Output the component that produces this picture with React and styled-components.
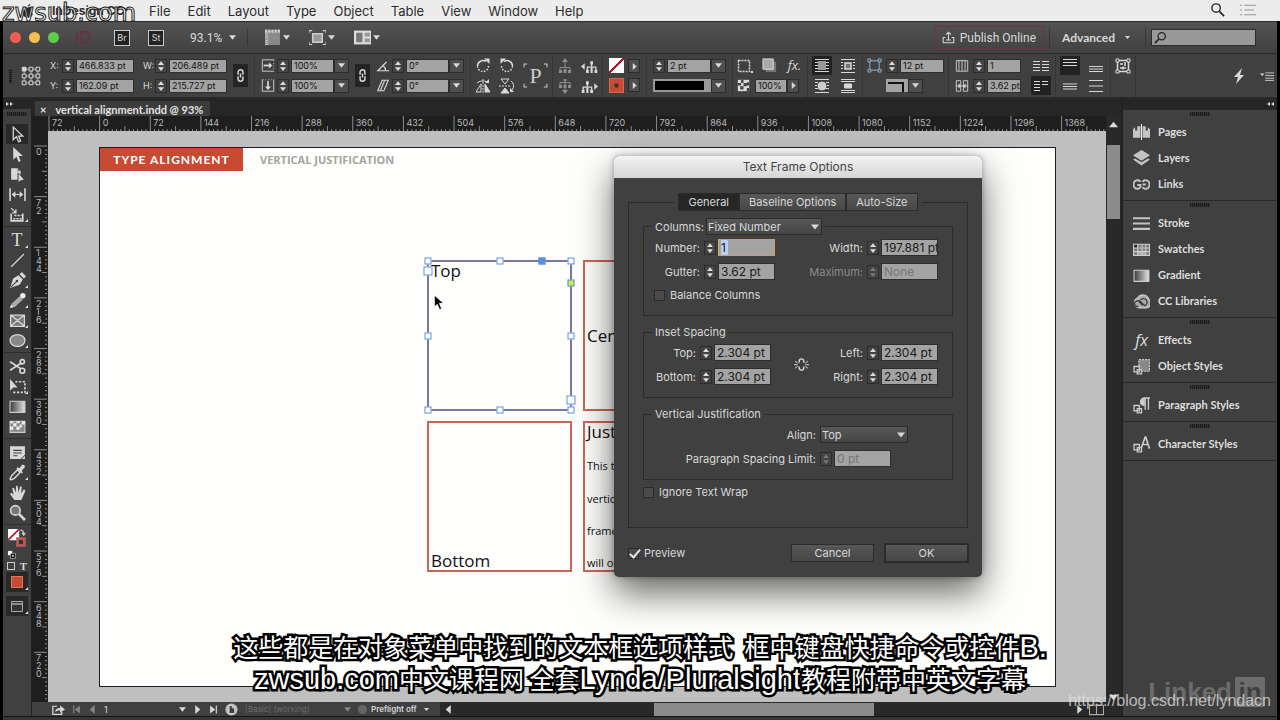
import React from "react";
import styled, { createGlobalStyle, css } from "styled-components";

const ui = `Inter, "Liberation Sans", sans-serif`;
const bar = `"Open Sans", "Noto Sans", sans-serif`;
const label = `Lato, "Open Sans", sans-serif`;

/* icons, all drawn on a 16 x 16 grid unless noted */

const icons = {
  apple: (
    <path
      fill="currentColor"
      d="M11 1c.1 1.500-1.200 3-2.700 2.900C8.200 2.500 9.500 1.100 11 1zM13.800 11.600c-.8 1.900-2 3.400-3.100 3.400-.9 0-1.300-.5-2.400-.5s-1.600.5-2.400.5C4.300 15 2 11.600 2 8.700c0-2.700 1.700-4.300 3.500-4.300 1 0 1.900.7 2.600.7.600 0 1.700-.7 3-.7.900 0 1.900.5 2.500 1.400-2.100 1.300-1.800 4.600.2 5.800z"
    />
  ),
  search: (
    <g fill="none" stroke="currentColor" strokeWidth="1.500">
      <circle cx="6.500" cy="6.500" r="4.500" />
      <path d="M10 10l5 5" strokeWidth="2" />
    </g>
  ),
  list: (
    <path d="M1 3h2M5 3h11M1 7.500h2M5 7.500h9M1 12h2M5 12h11" stroke="currentColor" />
  ),
  reference: (
    <g fill="none" stroke="currentColor" strokeWidth=".8">
      <path d="M4 2.500h3M9 2.500h3M4 8h3M9 8h3M4 13.500h3M9 13.500h3M2.500 4v3M2.500 9v3M13.500 4v3M13.500 9v3M8 4v3M8 9v3" strokeWidth=".6" />
      <path d="M6.500 1h3v3h-3zM12 1h3v3h-3zM1 6.500h3v3H1zM6.500 6.500h3v3h-3zM12 6.500h3v3h-3zM1 12h3v3H1zM6.500 12h3v3h-3zM12 12h3v3h-3z" fill="#404040" />
      <path d="M1 1h3v3H1z" fill="currentColor" />
    </g>
  ),
  chain: (
    <g fill="none" stroke="currentColor" strokeWidth="1.800">
      <path d="M5 7V4a3 3 0 0 1 6 0v3M5 9v3a3 3 0 0 0 6 0V9M8 5.500v5" />
    </g>
  ),
  unchain: (
    <g fill="none" stroke="currentColor" strokeWidth="1.500">
      <path d="M5.500 6V4.500a2.500 2.500 0 0 1 5 0V6M5.500 10v1.500a2.500 2.500 0 0 0 5 0V10" />
      <path d="M4 6.500L1 4.500M4 8.200H0M4 10l-3 2M12 6.500l3-2M12 8.200h4M12 10l3 2" strokeWidth="1" />
    </g>
  ),
  scaleX: (
    <g stroke="currentColor" fill="none">
      <path d="M1 1.500h14M1 14.500h14M1.500 2v12" />
      <path d="M14.500 2v12" strokeDasharray="1 2" />
      <path d="M3 8h8" strokeWidth="2" />
      <path d="M9 4.500l4 3.500-4 3.500z" fill="currentColor" stroke="none" />
    </g>
  ),
  scaleY: (
    <g stroke="currentColor" fill="none">
      <path d="M1.500 1v14M14.500 1v14M2 14.500h12" />
      <path d="M2 1.500h12" strokeDasharray="1 2" />
      <path d="M8 3v8" strokeWidth="2" />
      <path d="M4.500 9L8 13l3.500-4z" fill="currentColor" stroke="none" />
    </g>
  ),
  angle: (
    <path d="M15 14H2L12 4M8 8a8 8 0 0 1 3 6" stroke="currentColor" fill="none" strokeWidth="1.300" />
  ),
  shear: (
    <g stroke="currentColor" fill="none" strokeWidth="1.300">
      <path d="M2 14L7 2h7L9 14z" />
      <path d="M5 14L10 2" />
    </g>
  ),
  rotateCw: (
    <g fill="none" stroke="currentColor" strokeWidth="1.500">
      <path d="M2.500 8A5.500 5.500 0 0 1 11 3.500" />
      <path d="M13.500 8A5.500 5.500 0 1 1 2.500 8" strokeDasharray="1.500 1.500" />
      <path d="M9 .5h5.500V6z" fill="currentColor" stroke="none" />
    </g>
  ),
  rotateCcw: (
    <g fill="none" stroke="currentColor" strokeWidth="1.500">
      <path d="M13.500 8A5.500 5.500 0 0 0 5 3.500" />
      <path d="M2.500 8a5.500 5.500 0 1 0 11 0" strokeDasharray="1.500 1.500" />
      <path d="M7 .5H1.500V6z" fill="currentColor" stroke="none" />
    </g>
  ),
  flipH: (
    <g fill="none" stroke="currentColor">
      <path d="M8 1v14" strokeDasharray="2 1" />
      <path d="M1 14l5-8v8z" />
      <path d="M15 14l-5-8v8z" fill="currentColor" />
      <path d="M2 5a7 5 0 0 1 10-1" />
      <path d="M10 5h4V1z" fill="currentColor" stroke="none" />
    </g>
  ),
  flipV: (
    <g fill="none" stroke="currentColor">
      <path d="M0 8h12" strokeDasharray="2 1" />
      <path d="M2 1h8L6 6z" />
      <path d="M2 15h8l-4-5z" fill="currentColor" />
      <path d="M12 3a6 6 0 0 1 1 9" />
      <path d="M11 10v4h4z" fill="currentColor" stroke="none" />
    </g>
  ),
  treeUp: (
    <g stroke="currentColor" fill="none">
      <path d="M8 4v6M3 12V9.500h10V12" />
      <path d="M5 4l3-4 3 4zM2 12h3v3H2zM6.500 11h3v4h-3zM11 12h3v3h-3z" fill="currentColor" stroke="none" />
    </g>
  ),
  treeDown: (
    <g stroke="currentColor" fill="none">
      <path d="M8 2v10M3 8V4.500h10V8" />
      <path d="M5 12l3 4 3-4zM2 7h3v3H2zM6.500 7h3v3h-3zM11 7h3v3h-3zM6.500 1h3v2h-3z" fill="currentColor" stroke="none" />
    </g>
  ),
  treeLeft: (
    <g stroke="currentColor" fill="none">
      <path d="M10 5v4M6 12V8.500h8V12" strokeWidth="1.200" />
      <path d="M3.500 5v6L0 8zM8.700 3h2.600v3H8.700zM4.700 11h2.600v3H4.700zM9 9h2v5H9zM12.700 11h2.600v3h-2.600z" fill="currentColor" stroke="none" />
    </g>
  ),
  treeRight: (
    <g stroke="currentColor" fill="none">
      <path d="M6 5v4M2 12V8.500h8V12" strokeWidth="1.200" />
      <path d="M12.500 5v6L16 8zM4.700 3h2.600v3H4.700zM.7 11h2.600v3H.700zM5 9h2v5H5zM8.700 11h2.600v3H8.700z" fill="currentColor" stroke="none" />
    </g>
  ),
  corners: (
    <g fill="none" stroke="currentColor">
      <path d="M1.500 2.500h11v11h-11z" strokeDasharray="2 1" strokeWidth="1.500" />
      <path d="M14 13h2v2h-2z" fill="currentColor" stroke="none" />
    </g>
  ),
  shadow: (
    <g>
      <path d="M4 4h11v11H4z" fill="#777" />
      <path d="M1 1h11v11H1z" fill="#aaa" stroke="#ddd" />
    </g>
  ),
  checker: (
    <g>
      <path d="M1 1h14v14H1z" fill="#ddd" />
      <path d="M5 1h3v4H5zM12 4h3v4h-3zM1 5h4v3H1zM8 5h4v4H8zM4 9h4v4H4zM12 11h3v4h-3z" fill="#444" />
    </g>
  ),
  wrapNone: (
    <g stroke="currentColor">
      <path d="M1 1.500h14M1 4.500h14M1 7.500h14M1 10.500h14M1 13.500h14" />
      <path d="M4 3h8v9H4z" fill="#999" stroke="none" />
    </g>
  ),
  wrapBox: (
    <g stroke="currentColor" fill="none">
      <path d="M1 1.500h14M1 14.500h14M1 4.500h2M1 7.500h2M1 10.500h2M13 4.500h2M13 7.500h2M13 10.500h2" />
      <path d="M5 5h6v6H5z" fill="#777" strokeWidth="1.500" />
    </g>
  ),
  wrapShape: (
    <g stroke="currentColor" fill="none">
      <path d="M1 1.500h14M1 14.500h14M1 4.500h3M1 7.500h2M1 10.500h3M12 4.500h3M13 7.500h2M12 10.500h3" />
      <circle cx="8" cy="8" r="4" fill="#ccc" />
    </g>
  ),
  wrapJump: (
    <g stroke="currentColor" fill="none">
      <path d="M1 1.500h14M1 3.500h14M1 12.500h14M1 14.500h14" />
      <path d="M4.500 6h7v4h-7z" fill="currentColor" />
    </g>
  ),
  fitFrame: (
    <g fill="none" stroke="#8fb3d6">
      <path d="M3 3h10v10H3z" />
      <path d="M1 1h3v3H1zM12 1h3v3h-3zM1 12h3v3H1zM12 12h3v3h-3z" fill="#404040" />
    </g>
  ),
  columns: (
    <path d="M1.500 2.500h13v12h-13zM4.500 2v12M8 2v12M11.500 2v12" fill="none" stroke="currentColor" />
  ),
  gutter: (
    <g fill="none" stroke="currentColor">
      <path d="M1.500 2.500h5v12h-5zM9.500 2.500h5v12h-5z" />
      <path d="M1 8.500h14" />
      <path d="M4 5.500l3 3-3 3zM12 5.500l-3 3 3 3z" fill="currentColor" stroke="none" />
    </g>
  ),
  twoCols: (
    <path d="M0 3.500h7M9 3.500h7M0 6.500h7M9 6.500h7M0 9.500h7M9 9.500h7M0 12.500h7M9 12.500h7" stroke="currentColor" />
  ),
  twoColsShort: (
    <path d="M1 3.500h6M9 3.500h6M1 6.500h6M9 6.500h6M1 9.500h6M1 12.500h6" stroke="currentColor" />
  ),
  alignTop: <path d="M1 1.500h14M1 4.500h14M1 7.500h14" stroke="currentColor" />,
  alignMid: <path d="M1 6h14M1 8.500h14M1 11h14" stroke="currentColor" />,
  alignBottom: <path d="M1 8.500h14M1 11h14M1 13.500h14" stroke="currentColor" />,
  alignJustify: <path d="M1 2.500h14M1 8h14M1 13.500h14" stroke="currentColor" />,
  fitContent: (
    <g fill="none" stroke="currentColor">
      <path d="M2.500 2.500h11v11h-11z" strokeWidth="1.500" />
      <path d="M1 1h3v3H1zM12 1h3v3h-3zM1 12h3v3H1zM12 12h3v3h-3z" fill="#404040" />
      <path d="M5 6h3M10 4v4M5 10h6M8 8.500v3" strokeWidth="1.500" />
    </g>
  ),
  bolt: <path d="M11 0L3 9h4l-2 7 8-9H9z" fill="currentColor" />,
  flyout: (
    <g>
      <path d="M0 5h5L2.500 8z" fill="currentColor" />
      <path d="M6 4.500h10M6 7.500h10M6 10.500h10M6 13h10" stroke="currentColor" />
    </g>
  ),
  publish: (
    <g fill="none" stroke="currentColor" strokeWidth="1.300">
      <path d="M4 8H1.500v6.500h13V8H12" />
      <path d="M8 11V2M5 4.500L8 1.500l3 3M5 11h6" />
    </g>
  ),
  viewRuler: (
    <g fill="none" stroke="#ccc">
      <path d="M1 1h14v14H1z" fill="#8a8a8a" stroke="none" />
      <path d="M1 2h14" strokeWidth="3" strokeDasharray="2 1" />
      <path d="M2.500 4v11" strokeWidth="3" strokeDasharray="1 1" />
    </g>
  ),
  viewScreen: (
    <g fill="none" stroke="#ccc">
      <path d="M3.500 4.500h9v8h-9z" fill="#999" strokeWidth="1.500" />
      <path d="M0 4V1.500h3M13 1.500h3V4M16 12v2.500h-3M3 14.500H0V12" />
    </g>
  ),
  viewArrange: (
    <g>
      <path d="M0 1.500h16v13H0z" fill="#ddd" />
      <path d="M2 3.500h6v9H2z" fill="#777" />
      <path d="M10 3.500h5v3.500h-5zM10 9h5v3.500h-5z" fill="#999" />
    </g>
  ),
  selection: <path d="M4 1v12l3-3 2 5 2-1-2-4.500h4z" fill="#2a2a2a" stroke="currentColor" strokeWidth="1.200" />,
  direct: <path d="M4 1v12l3-3 2 5 2-1-2-4.500h4z" fill="currentColor" />,
  pageTool: (
    <g fill="currentColor">
      <path d="M2 2h6l3 3v3L8 6v7H2z" />
      <path d="M8 2v3h3z" fill="#777" />
      <path d="M9 7v8l2-1.500 3-.5z" />
    </g>
  ),
  gap: (
    <g stroke="currentColor" fill="currentColor">
      <path d="M1 2v12M15 2v12" strokeWidth="1.500" />
      <path d="M4 8h8" />
      <path d="M2.500 8L6 5v6zM13.500 8L10 5v6z" stroke="none" />
    </g>
  ),
  collector: (
    <g fill="none" stroke="currentColor" strokeWidth="1.500">
      <path d="M2 7v7h11V7" />
      <path d="M4 12h8M5 9h7" strokeDasharray="2 1" />
      <path d="M2 2l4 4M6.500 3v3.500H3" strokeWidth="1.200" />
    </g>
  ),
  line: <path d="M2 14L14 2" stroke="currentColor" strokeWidth="1.300" />,
  pen: (
    <g>
      <path d="M1 15l3-9 5-3 4 4-3 5z" fill="currentColor" />
      <path d="M10 2l2-2 4 4-2 2z" fill="currentColor" />
      <path d="M2 14l5-5" stroke="#404040" />
      <circle cx="7.500" cy="8.500" r="1.200" fill="#404040" />
    </g>
  ),
  pencil: (
    <g>
      <path d="M1 15l1.500-4L10 4l3 3-7.500 7z" fill="#aaa" />
      <circle cx="13" cy="3.500" r="2.500" fill="#eee" />
      <path d="M1 15l1-3 2 2z" fill="#eee" />
    </g>
  ),
  frame: (
    <path d="M1.500 3h13v10.500h-13zM2 3l12 10M14 3L2 13" fill="#777" stroke="currentColor" strokeWidth="1.200" />
  ),
  ellipse: <ellipse cx="8" cy="8" rx="7" ry="5.500" fill="#888" stroke="currentColor" strokeWidth="1.200" />,
  scissors: (
    <g fill="none" stroke="currentColor" strokeWidth="1.500">
      <path d="M1 3.500l10 6.500M1 11.500l11-7" />
      <circle cx="12.500" cy="3.500" r="2" />
      <circle cx="12.500" cy="12" r="2.300" />
    </g>
  ),
  transform: (
    <g>
      <path d="M1 1v11l3-3h4z" fill="currentColor" />
      <path d="M6 3.500h9v10H4" fill="none" stroke="currentColor" strokeWidth="1.500" strokeDasharray="2 1.500" />
    </g>
  ),
  gradient: (
    <g>
      <defs>
        <linearGradient id="fade">
          <stop offset="0" stopColor="#3a3a3a" />
          <stop offset="1" stopColor="#e4e4e4" />
        </linearGradient>
      </defs>
      <path d="M1 3h14v10.500H1z" fill="url(#fade)" stroke="#ccc" />
    </g>
  ),
  feather: (
    <g>
      <path d="M1 3h14v10.500H1z" fill="#888" stroke="#ccc" />
      <path d="M1 3h3v2H1zM7 3h3v2H7zM12 3h3v3h-3zM4 5h3v3H4zM10 6h2v3h-2zM1 8h3v3H1zM7 8h3v3H7z" fill="#eee" />
    </g>
  ),
  note: (
    <g>
      <path d="M1 2h14v8l-4 4H1z" fill="currentColor" />
      <path d="M4 6h8M4 8.500h8M4 11h4" stroke="#404040" />
      <path d="M15 11v3h-3z" fill="currentColor" />
    </g>
  ),
  dropper: (
    <g>
      <path d="M2 15l-1-1 1.500-3L8 5.500 10.500 8 5 13.500z" fill="none" stroke="currentColor" strokeWidth="1.300" />
      <path d="M8 3l2 1 2-3q3-1 3 2l-3 3 1 2-1 1-5-5z" fill="currentColor" />
    </g>
  ),
  hand: (
    <path
      d="M5 15L1 9.500 2 8l2.500 2L3 4l1.500-.5L6.500 8V2L8 1.500 9 8l1.500-6 1.500.5L11.500 9 14 5l1.500 1-2.500 6-1.500 3z"
      fill="currentColor"
    />
  ),
  zoomTool: (
    <g>
      <circle cx="6" cy="6" r="4.500" fill="#777" stroke="currentColor" strokeWidth="1.500" />
      <path d="M9.500 9.500L15 15" stroke="currentColor" strokeWidth="2.500" />
    </g>
  ),
  fillStroke: (
    <g>
      <path d="M0 0h10v10H0z" fill="#fff" />
      <path d="M0 10L10 0" stroke="#b31224" strokeWidth="1.500" />
      <path d="M8.500 8.500h6v6h-6z" fill="#333" stroke="#b85a55" strokeWidth="2.500" />
      <path d="M11 1q3 0 3 4M12.500 3.500L14 5.500 15.500 3.500" fill="none" stroke="#ccc" />
    </g>
  ),
  defaults: (
    <g>
      <path d="M1 1h9v9H1z" fill="#fff" stroke="#111" />
      <path d="M6 6h9v9H6z" fill="#111" stroke="#ddd" />
      <path d="M9 9h3v3H9z" fill="#ddd" />
    </g>
  ),
  viewMode: (
    <g fill="none" stroke="#aaa">
      <path d="M2.500 3.500h11v10h-11z" fill="#333" />
      <path d="M2.500 6h11" strokeWidth="1.500" />
    </g>
  ),
  pages: (
    <g fill="currentColor">
      <path d="M0 5l2-2v3h2V2h3v11H0z" />
      <path d="M16 5l-2-2v3h-2V2H9v11h7z" />
      <path d="M7.500 0h1v15h-1z" fill="#eee" />
    </g>
  ),
  layers: (
    <g fill="currentColor">
      <path d="M8 0l8 5-8 5-8-5z" />
      <path d="M0 9l2-1 6 3.500L14 8l2 1-8 5.500z" />
    </g>
  ),
  links: (
    <g fill="none" stroke="currentColor" strokeWidth="1.800">
      <path d="M7 5.500A3 3 0 0 0 5 4H4a3.500 4 0 0 0 0 8h1a3 3 0 0 0 2-1.500V8.500H4M9 5.500A3 3 0 0 1 11 4h1a3.500 4 0 0 1 0 8h-1a3 3 0 0 1-2-1.500M9 8h3" />
    </g>
  ),
  stroke: <path d="M0 3h16M0 8h16M0 13h16" stroke="currentColor" strokeWidth="2" />,
  swatches: (
    <g>
      <path d="M.5 3h15v10.500H.5z" fill="#777" />
      <path d="M.5 3h3.500v3.500H.500z" fill="#222" />
      <path d="M4 9h8v4H4z" fill="#aaa" />
      <path d="M.5 3h15v10.500H.5zM.5 6.500h15M.5 10h15M4.500 3v10M8.500 3v10M12 3v10" fill="none" stroke="#ccc" />
    </g>
  ),
  cloud: (
    <g fill="none">
      <path d="M5.500 14a5 5 0 0 1-1-9.500A5.800 5.800 0 0 1 15 6a4.500 4.500 0 0 1-3.500 8z" fill="#aaa" stroke="#d0d0d0" />
      <path d="M9 11.500L6.500 9A2.600 2.600 0 1 0 5 12.500M7 6.500a3.500 3.500 0 1 1 4 5.500L6 7" stroke="#404040" strokeWidth="1.300" />
    </g>
  ),
  objectStyles: (
    <g fill="none" stroke="#ccc">
      <path d="M5.500 1.500h10v11h-10z" fill="#888" strokeDasharray="2 1" />
      <path d="M1 8h5v5H1zM4 11h4v4H4z" fill="#404040" strokeWidth="1.200" />
    </g>
  ),
  paragraphStyles: (
    <g fill="none" stroke="#ccc">
      <path d="M10 1h6M11.500 1v11M14.500 1v11" strokeWidth="1.300" />
      <path d="M10.500 1a3.500 3.500 0 0 0 0 7z" fill="#ccc" />
      <path d="M1 8h5v5H1zM4 11h4v4H4z" fill="#404040" strokeWidth="1.200" />
    </g>
  ),
  characterStyles: (
    <g fill="none" stroke="#ccc">
      <path d="M7.500 12l4-11h.5l3.500 11M9 8h5" strokeWidth="1.600" />
      <path d="M1 8h5v5H1zM4 11h4v4H4z" fill="#404040" strokeWidth="1.200" />
    </g>
  ),
  exportDoc: (
    <g fill="none" stroke="currentColor" strokeWidth="1.500">
      <path d="M6 4H1v10h11v-3" />
      <path d="M4 11q0-5 6-5V3l6 5-6 4V9q-4 0-6 2z" fill="currentColor" stroke="none" />
    </g>
  ),
  docSync: (
    <g>
      <circle cx="8" cy="8" r="7.500" fill="#bbb" />
      <path d="M5 3h4l3 3v7H5z" fill="#404040" stroke="#eee" />
      <path d="M9 3v3h3" fill="none" stroke="#eee" />
    </g>
  ),
  split: <path d="M.5 3.500h15v10H.5zM8 3v10" fill="none" stroke="#aaa" strokeWidth="1.200" />,
  collapse: <path d="M0 4l6 4-6 4zM8 4l6 4-6 4z" fill="currentColor" />,
  expand: <path d="M8 4L2 8l6 4zM16 4l-6 4 6 4z" fill="currentColor" />,
  up: <path d="M0 13h16L8 3z" fill="currentColor" />,
  down: <path d="M0 3h16L8 13z" fill="currentColor" />,
  left: <path d="M12 0v16L3 8z" fill="currentColor" />,
  right: <path d="M4 0v16l9-8z" fill="currentColor" />,
  first: <path d="M2 1h2v14H2zM14 1v14L5 8z" fill="currentColor" />,
  last: <path d="M12 1h2v14h-2zM2 1v14l9-7z" fill="currentColor" />,
};

const Icon = ({ name, size = 14 }) => (
  <svg width={size} height={size} viewBox="0 0 16 16" aria-hidden="true">
    {icons[name]}
  </svg>
);

const Spin = ({ label, off }) => (
  <Stepper $off={off}>
    <StepButton type="button" aria-label={`${label} up`}>
      <Icon name="up" size={6} />
    </StepButton>
    <StepButton type="button" aria-label={`${label} down`}>
      <Icon name="down" size={6} />
    </StepButton>
  </Stepper>
);

const Measure = ({ label, value, width, text, drop }) => (
  <BarField>
    {text && <BarLabel htmlFor={`bar-${label}`}>{text}</BarLabel>}
    <Spin label={label} />
    <BarInput id={`bar-${label}`} aria-label={label} defaultValue={value} $width={width} />
    {drop && <Drop label={`${label} presets`} />}
  </BarField>
);

const Drop = ({ label, dir = "down" }) => (
  <DropButton type="button" aria-label={label} $narrow={dir === "right"}>
    <Icon name={dir} size={7} />
  </DropButton>
);

const Tool = ({ icon, label, size = 16, on, dim }) => (
  <IconButton type="button" aria-label={label} $on={on} $dim={dim}>
    <Icon name={icon} size={size} />
  </IconButton>
);

/* one ruler step is 72pt at the current zoom */
const STEP = 50.63;

const HorizontalRuler = () => {
  const marks = [];
  for (let i = 0; i < 21; i++) marks.push(i);
  return (
    <RulerTop>
      <svg width="100%" height="15">
        {marks.map((i) => (
          <g key={i} transform={`translate(${1 + i * STEP} 0)`}>
            {[...Array(12).keys()].map((t) => (
              <path
                key={t}
                d={`M${(t * STEP) / 12} 15v${t === 0 ? -15 : t === 6 ? -5 : -2}`}
                stroke="#8c8c8c"
              />
            ))}
            <text x="3" y="10" fill="#b8b8b8" fontSize="9">
              {Math.abs((i - 1) * 72)}
            </text>
          </g>
        ))}
      </svg>
    </RulerTop>
  );
};

const VerticalRuler = () => {
  const marks = [];
  for (let i = 0; i < 11; i++) marks.push(i);
  return (
    <RulerSide>
      <svg width="15" height="100%">
        {marks.map((i) => (
          <g key={i} transform={`translate(0 ${15 + i * STEP})`}>
            {[...Array(12).keys()].map((t) => (
              <path
                key={t}
                d={`M15 ${(t * STEP) / 12}h${t === 0 ? -13 : t === 6 ? -5 : -2}`}
                stroke="#8c8c8c"
              />
            ))}
            {String(i * 72)
              .split("")
              .map((n, k) => (
                <text key={k} x="4" y={9 + k * 8} fill="#b8b8b8" fontSize="9">
                  {n}
                </text>
              ))}
          </g>
        ))}
      </svg>
    </RulerSide>
  );
};

const menus = ["File", "Edit", "Layout", "Type", "Object", "Table", "View", "Window", "Help"];

const toolGroups = [
  [
    ["selection", "Selection", true],
    ["direct", "Direct selection"],
    ["pageTool", "Page"],
    ["gap", "Gap"],
    ["collector", "Content collector", false, true],
  ],
  [
    ["T", "Type", false, true],
    ["line", "Line"],
    ["pen", "Pen", false, true],
    ["pencil", "Pencil", false, true],
    ["frame", "Rectangle frame", false, true],
    ["ellipse", "Ellipse", false, true],
  ],
  [
    ["scissors", "Scissors"],
    ["transform", "Free transform", false, true],
    ["gradient", "Gradient swatch"],
    ["feather", "Gradient feather"],
  ],
  [
    ["note", "Note"],
    ["dropper", "Eyedropper", false, true],
    ["hand", "Hand"],
    ["zoomTool", "Zoom"],
  ],
];

const panelGroups = [
  [["pages", "Pages"], ["layers", "Layers"], ["links", "Links"]],
  [["stroke", "Stroke"], ["swatches", "Swatches"], ["gradient", "Gradient"], ["cloud", "CC Libraries"]],
  [["fx", "Effects"], ["objectStyles", "Object Styles"]],
  [["paragraphStyles", "Paragraph Styles"]],
  [["characterStyles", "Character Styles"]],
];

const Field = ({ id, label, value, off, focus }) => (
  <>
    <FieldLabel htmlFor={id} $off={off}>{label}</FieldLabel>
    <FieldBox>
      <Spin label={label} off={off} />
      <TextInput id={id} defaultValue={value} disabled={off} $focus={focus} />
    </FieldBox>
  </>
);

const Dialog = () => (
  <DialogBox role="dialog" aria-label="Text Frame Options">
    <DialogTitle>Text Frame Options</DialogTitle>
    <DialogBody>
      <TabPanel>
        <TabList>
          <Tab type="button" $on>General</Tab>
          <Tab type="button">Baseline Options</Tab>
          <Tab type="button">Auto-Size</Tab>
        </TabList>
        <Section>
          <Legend>
            <label htmlFor="columns">Columns:</label>
            <Select $width="116px">
              <select id="columns" defaultValue="Fixed Number">
                <option>Fixed Number</option>
                <option>Fixed Width</option>
                <option>Flexible Width</option>
              </select>
              <Icon name="down" size={8} />
            </Select>
          </Legend>
          <Fields $cols="48px 71px 1fr 71px">
            <Field id="number" label="Number:" value="1" focus />
            <Field id="width" label="Width:" value="197.881 pt" />
            <Field id="gutter" label="Gutter:" value="3.62 pt" />
            <Field id="maximum" label="Maximum:" value="None" off />
          </Fields>
          <Check>
            <input type="checkbox" /> Balance Columns
          </Check>
        </Section>
        <Section>
          <Legend>Inset Spacing</Legend>
          <InsetRow>
            <Fields $cols="44px 71px">
              <Field id="top" label="Top:" value="2.304 pt" />
              <Field id="bottom" label="Bottom:" value="2.304 pt" />
            </Fields>
            <IconButton type="button" aria-label="Make all settings the same">
              <Icon name="unchain" size={15} />
            </IconButton>
            <Fields $cols="32px 71px">
              <Field id="left" label="Left:" value="2.304 pt" />
              <Field id="right" label="Right:" value="2.304 pt" />
            </Fields>
          </InsetRow>
        </Section>
        <Section>
          <Legend>Vertical Justification</Legend>
          <Fields $cols="164px 1fr">
            <FieldLabel htmlFor="align">Align:</FieldLabel>
            <Select $width="88px">
              <select id="align" defaultValue="Top">
                <option>Top</option>
                <option>Center</option>
                <option>Bottom</option>
                <option>Justify</option>
              </select>
              <Icon name="down" size={8} />
            </Select>
            <FieldLabel htmlFor="limit">Paragraph Spacing Limit:</FieldLabel>
            <FieldBox>
              <Spin label="Paragraph Spacing Limit" off />
              <TextInput id="limit" defaultValue="0 pt" disabled />
            </FieldBox>
          </Fields>
        </Section>
        <Check $outer>
          <input type="checkbox" /> Ignore Text Wrap
        </Check>
      </TabPanel>
      <DialogFooter>
        <Check $outer>
          <input type="checkbox" defaultChecked /> Preview
        </Check>
        <DialogButton type="button">Cancel</DialogButton>
        <DialogButton type="button" $main>OK</DialogButton>
      </DialogFooter>
    </DialogBody>
  </DialogBox>
);

const handles = [
  [0, 0], [50, 0], [100, 0], [0, 50], [100, 50], [0, 100], [50, 100], [100, 100],
];

const Artwork = () => (
  <Page>
    <PageHeader>
      <Banner>TYPE ALIGNMENT</Banner>
      <SubTitle>VERTICAL JUSTIFICATION</SubTitle>
    </PageHeader>
    <Frames>
      <Frame $selected>
        <Heading>Top</Heading>
        <Handles>
          {handles.map(([x, y]) => (
            <Handle key={`${x}-${y}`} $x={x} $y={y} />
          ))}
          <Handle $x={80} $y={0} $fill="#5b8fe6" />
          <Handle $x={100} $y={15} $fill="#d5e84a" />
          <Handle $x={0} $y={7} $big />
          <Handle $x={100} $y={93} $big />
        </Handles>
        <Cursor viewBox="0 0 12 18">
          <path d="M1 1v13l3-3 2.500 5.500 2.500-1L6.500 10H11z" fill="#000" stroke="#fff" />
        </Cursor>
      </Frame>
      <Frame $justify="center">
        <Heading>Center</Heading>
      </Frame>
      <Frame $justify="flex-end">
        <Heading>Bottom</Heading>
      </Frame>
      <Frame $justify="space-between">
        <Heading>Justify</Heading>
        <Copy>This text is</Copy>
        <Copy>vertically set</Copy>
        <Copy>frame and it</Copy>
        <Copy>will only go</Copy>
      </Frame>
    </Frames>
  </Page>
);

export default function App() {
  return (
    <Screen>
      <GlobalStyle />
      <MenuBar>
        <Icon name="apple" size={15} />
        <AppName href="#app">InDesign CC</AppName>
        {menus.map((m) => (
          <MenuLink key={m} href={`#${m.toLowerCase()}`}>{m}</MenuLink>
        ))}
        <MenuRight>
          <Icon name="search" size={15} />
          <Faint><Icon name="list" size={17} /></Faint>
        </MenuRight>
      </MenuBar>

      <AppBar>
        <Lights>
          <Light $color="#ee5c54" />
          <Light $color="#f6be50" />
          <Light $color="#5fcb4b" />
        </Lights>
        <AppLogo>ID</AppLogo>
        <Badges>
          <Badge href="#bridge">Br</Badge>
          <Badge href="#stock">St</Badge>
        </Badges>
        <ZoomLevel type="button">93.1% <Icon name="down" size={7} /></ZoomLevel>
        <ViewButtons>
          <ViewButton type="button" aria-label="View options"><Icon name="viewRuler" size={17} /><Icon name="down" size={7} /></ViewButton>
          <ViewButton type="button" aria-label="Screen mode"><Icon name="viewScreen" size={17} /><Icon name="down" size={7} /></ViewButton>
          <ViewButton type="button" aria-label="Arrange documents"><Icon name="viewArrange" size={17} /><Icon name="down" size={7} /></ViewButton>
        </ViewButtons>
        <Publish type="button"><Icon name="publish" size={13} /> Publish Online</Publish>
        <Workspace type="button">Advanced <Icon name="down" size={5} /></Workspace>
        <SearchBox>
          <Icon name="search" size={13} />
          <input type="search" aria-label="Search" />
        </SearchBox>
      </AppBar>

      <ControlBar>
        <ControlGroup $gap="9px" $first>
          <Grip $tall />
          <Icon name="reference" size={20} />
          <Stack>
            <Measure text="X:" label="X" value="466.833 pt" width="58px" />
            <Measure text="Y:" label="Y" value="162.09 pt" width="58px" />
          </Stack>
          <Stack>
            <Measure text="W:" label="W" value="206.489 pt" width="58px" />
            <Measure text="H:" label="H" value="215.727 pt" width="58px" />
          </Stack>
          <ChainButton type="button" aria-label="Constrain size"><Icon name="chain" size={13} /></ChainButton>
        </ControlGroup>
        <ControlGroup $gap="2px">
          <Stack>
            <Icon name="scaleX" />
            <Icon name="scaleY" />
          </Stack>
          <Stack>
            <Measure label="Scale X" value="100%" width="43px" drop />
            <Measure label="Scale Y" value="100%" width="43px" drop />
          </Stack>
          <ChainButton type="button" aria-label="Constrain scale" $spaced><Icon name="chain" size={13} /></ChainButton>
          <Stack>
            <Icon name="angle" />
            <Icon name="shear" />
          </Stack>
          <Stack>
            <Measure label="Rotation" value="0°" width="43px" drop />
            <Measure label="Shear" value="0°" width="43px" drop />
          </Stack>
        </ControlGroup>
        <ControlGroup $gap="8px" $tight>
          <Stack>
            <Tool icon="rotateCw" label="Rotate clockwise" />
            <Tool icon="flipH" label="Flip horizontal" />
          </Stack>
          <Stack>
            <Tool icon="rotateCcw" label="Rotate counter-clockwise" />
            <Tool icon="flipV" label="Flip vertical" />
          </Stack>
          <Proxy viewBox="0 0 24 24">
            <path d="M1 4V1h3M20 1h3v3M23 20v3h-3M4 23H1v-3" fill="none" stroke="#ccc" />
            <text x="12" y="19" textAnchor="middle" fontFamily="Liberation Serif, serif" fontSize="21" fill="#ccc">P</text>
          </Proxy>
        </ControlGroup>
        <ControlGroup $gap="8px" $tight>
          <Stack>
            <Tool icon="treeUp" label="Select container" dim />
            <Tool icon="treeDown" label="Select content" dim />
          </Stack>
          <Stack>
            <Tool icon="treeLeft" label="Previous object" size={17} />
            <Tool icon="treeRight" label="Next object" size={17} />
          </Stack>
        </ControlGroup>
        <ControlGroup $gap="4px">
          <Stack>
            <Swatch $none />
            <Swatch />
          </Stack>
          <Stack>
            <Drop label="Fill" dir="right" />
            <Drop label="Stroke" dir="right" />
          </Stack>
        </ControlGroup>
        <ControlGroup $gap="4px">
          <Stack>
            <Measure label="Weight" value="2 pt" width="44px" drop />
            <BarField>
              <LineStyle />
              <Drop label="Stroke type" />
            </BarField>
          </Stack>
        </ControlGroup>
        <ControlGroup $tight>
          <Stack>
            <BarField $gap="9px">
              <Icon name="corners" size={16} />
              <Icon name="shadow" size={15} />
              <Fx>fx.</Fx>
            </BarField>
            <BarField>
              <Icon name="checker" size={13} />
              <OpacityInput aria-label="Opacity" defaultValue="100%" />
              <Drop label="Opacity slider" dir="right" />
            </BarField>
          </Stack>
        </ControlGroup>
        <ControlGroup $gap="10px">
          <Stack>
            <Tool icon="wrapNone" label="No text wrap" on />
            <Tool icon="wrapShape" label="Wrap around shape" />
          </Stack>
          <Stack>
            <Tool icon="wrapBox" label="Wrap around box" />
            <Tool icon="wrapJump" label="Jump object" />
          </Stack>
        </ControlGroup>
        <ControlGroup $gap="4px" $tight>
          <Top>
            <Icon name="fitFrame" size={15} />
          </Top>
          <Stack>
            <Measure label="Corner size" value="12 pt" width="44px" />
            <BarField>
              <CornerShape />
              <Drop label="Corner shape" />
            </BarField>
          </Stack>
        </ControlGroup>
        <ControlGroup $gap="4px">
          <Stack>
            <Icon name="columns" />
            <Icon name="gutter" />
          </Stack>
          <Stack>
            <Measure label="Columns" value="1" width="34px" />
            <Measure label="Gutter" value="3.62 pt" width="34px" />
          </Stack>
        </ControlGroup>
        <ControlGroup $plain>
          <Stack>
            <Tool icon="twoCols" label="Unbalanced columns" />
            <Tool icon="twoColsShort" label="Balance columns" on />
          </Stack>
        </ControlGroup>
        <ControlGroup $gap="10px">
          <Stack>
            <Tool icon="alignTop" label="Align top" on />
            <Tool icon="alignMid" label="Align center" />
          </Stack>
          <Stack>
            <Tool icon="alignBottom" label="Align bottom" />
            <Tool icon="alignJustify" label="Justify vertically" />
          </Stack>
        </ControlGroup>
        <ControlGroup $tight>
          <Top>
            <Tool icon="fitContent" label="Auto fit" />
          </Top>
        </ControlGroup>
        <ControlGroup />
        <BarEnd>
          <Icon name="bolt" size={16} />
          <Icon name="flyout" size={14} />
        </BarEnd>
      </ControlBar>

      <Body>
        <Tools>
          <DockHead><Icon name="collapse" size={8} /></DockHead>
          <Grip />
          {toolGroups.map((group, i) => (
            <ToolGroup key={i}>
              {group.map(([icon, name, on, more]) => (
                <ToolButton key={name} type="button" aria-label={name} $on={on} $more={more}>
                  {icon === "T" ? <TypeGlyph>T</TypeGlyph> : <Icon name={icon} size={17} />}
                </ToolButton>
              ))}
            </ToolGroup>
          ))}
          <ToolGroup>
            <ToolButton type="button" aria-label="Fill and stroke"><Icon name="fillStroke" size={18} /></ToolButton>
            <SmallTools><Icon name="defaults" size={9} /></SmallTools>
            <SmallTools>
              <SquareMark />
              <b>T</b>
            </SmallTools>
            <ToolButton type="button" aria-label="Apply color" $on $more><ColorChip /></ToolButton>
            <ToolButton type="button" aria-label="View mode" $on $more $last><Icon name="viewMode" size={16} /></ToolButton>
          </ToolGroup>
        </Tools>

        <Document>
          <TabBar>
            <DocTab type="button"><span>×</span>vertical alignment.indd @ 93%</DocTab>
          </TabBar>
          <Workarea>
            <RulerCorner />
            <HorizontalRuler />
            <ScrollColumn>
              <Icon name="up" size={9} />
              <ScrollThumb />
              <Icon name="down" size={9} />
            </ScrollColumn>
            <VerticalRuler />
            <Pasteboard>
              <Artwork />
            </Pasteboard>
          </Workarea>
          <StatusBar>
            <Status>
              <Icon name="exportDoc" size={13} />
              <Faint><Icon name="first" size={9} /></Faint>
              <Faint><Icon name="left" size={9} /></Faint>
              <PageNumber aria-label="Page" defaultValue="1" />
              <Icon name="down" size={7} />
              <Icon name="right" size={9} />
              <Icon name="last" size={9} />
              <Icon name="docSync" size={13} />
              <Profile>[Basic] (working)</Profile>
              <Faint><Icon name="down" size={7} /></Faint>
              <Dot />
              <Preflight>Preflight off</Preflight>
              <Icon name="down" size={5} />
            </Status>
            <ScrollRow>
              <Icon name="left" size={9} />
              <ScrollTrack><i /></ScrollTrack>
              <Icon name="right" size={9} />
              <Icon name="split" size={15} />
            </ScrollRow>
          </StatusBar>
        </Document>

        <Panels>
          <DockHead $right><Icon name="expand" size={8} /></DockHead>
          {panelGroups.map((group, i) => (
            <PanelGroup key={i}>
              <Grip />
              {group.map(([icon, name]) => (
                <PanelButton key={name} type="button">
                  {icon === "fx" ? <Fx $big>fx</Fx> : <Icon name={icon} size={17} />}
                  {name}
                </PanelButton>
              ))}
            </PanelGroup>
          ))}
        </Panels>
      </Body>

      <Dialog />

      <Brand>Linked<b>in</b></Brand>
      <Watermark>https://blog.csdn.net/lyndacn</Watermark>
      <CornerMark>zwsub.com</CornerMark>
      <Subtitles>
        <p>这些都是在对象菜单中找到的文本框选项样式{"\u00a0\u00a0"}框中键盘快捷命令或控件<Latin>B.</Latin></p>
        <p>
          <Latin>zwsub.com</Latin>中文课程网 全套<Latin>Lynda/Pluralsight</Latin>教程附带中英文字幕
        </p>
      </Subtitles>
    </Screen>
  );
}

const GlobalStyle = createGlobalStyle`
  * {
    box-sizing: border-box;
  }
  body {
    margin: 0;
    background: #000;
    font-family: ${ui};
    color: #d8d8d8;
  }
  button, input, select {
    font: inherit;
    color: inherit;
    margin: 0;
    padding: 0;
    border: 0;
    border-radius: 0;
    background: none;
  }
  a {
    color: inherit;
    text-decoration: none;
  }
  svg {
    display: block;
    flex: none;
  }
`;

const Screen = styled.div`
  position: relative;
  min-height: 100vh;
  display: flex;
  flex-direction: column;
  padding: 0 3px 3px;
  overflow: hidden;
  background: linear-gradient(
    90deg,
    #000 3px,
    #363636 3px,
    #363636 calc(100% - 3px),
    #000 calc(100% - 3px)
  );
`;

const MenuBar = styled.nav`
  display: flex;
  align-items: center;
  gap: 17px;
  height: 21px;
  margin: 0 -3px;
  padding: 0 24px 0 20px;
  background: #ececec;
  color: #2c2c2c;
  font-size: 13px;
`;

const MenuLink = styled.a`
  white-space: nowrap;
`;

const AppName = styled(MenuLink)`
  width: 80px;
  font-size: 12px;
  font-weight: 700;
`;

const MenuRight = styled.div`
  display: flex;
  gap: 14px;
  margin-left: auto;
`;

const Faint = styled.span`
  opacity: 0.45;
`;

const AppBar = styled.header`
  display: flex;
  align-items: center;
  height: 33px;
  padding: 0 21px 0 7px;
  background: linear-gradient(#525252, #414141);
  border-top: 1px solid #2a2a2a;
  border-bottom: 1px solid #2a2a2a;
`;

const Lights = styled.div`
  display: flex;
  gap: 8px;
  margin-right: 16px;
`;

const Light = styled.i`
  width: 11px;
  height: 11px;
  border-radius: 50%;
  background: ${(p) => p.$color};
`;

const AppLogo = styled.span`
  width: 39px;
  color: #6f2a47;
  font-size: 17px;
`;

const Badges = styled.div`
  display: flex;
  gap: 18px;
  margin-right: 26px;
`;

const Badge = styled.a`
  width: 16px;
  height: 16px;
  border: 1px solid #c8c8c8;
  background: #222;
  font-size: 9px;
  line-height: 14px;
  text-align: center;
`;

const ZoomLevel = styled.button`
  display: flex;
  align-items: center;
  gap: 7px;
  font: 12px/20px Roboto, sans-serif;
`;

const ViewButtons = styled.div`
  display: flex;
  gap: 19px;
  margin-left: 11px;
  padding-left: 16px;
  border-left: 1px solid #363636;
`;

const ViewButton = styled.button`
  display: flex;
  align-items: center;
  gap: 2px;
`;

const Publish = styled.button`
  display: flex;
  align-items: center;
  gap: 5px;
  height: 23px;
  margin-left: auto;
  padding: 0 7px;
  border: 1px solid #74304a;
  font-size: 12px;
  font-family: Roboto, sans-serif;
`;

const Workspace = styled.button`
  display: flex;
  align-items: center;
  gap: 10px;
  margin: 0 5px;
  padding: 0 15px 0 12px;
  border-left: 1px solid #363636;
  border-right: 1px solid #363636;
  font: 700 12px/20px ${label};
`;

const SearchBox = styled.label`
  display: flex;
  align-items: center;
  width: 105px;
  height: 17px;
  padding: 0 2px;
  background: #999;
  border: 1px solid #2c2c2c;
  color: #222;

  svg {
    transform: scaleX(-1);
  }

  input {
    min-width: 0;
    flex: 1;
  }
`;

const ControlBar = styled.div`
  display: flex;
  align-items: stretch;
  height: 44px;
  background: #404040;
  border-bottom: 1px solid #2a2a2a;
  font-size: 9px;
  overflow: hidden;
`;

const ControlGroup = styled.div`
  display: flex;
  align-items: center;
  flex: none;
  gap: ${(p) => p.$gap || "0"};
  padding: ${(p) => (p.$tight ? "0 4px" : "0 6px")};
  border-left: ${(p) => (p.$first || p.$plain ? "0" : "1px dotted #2a2a2a")};
`;

const Stack = styled.div`
  display: flex;
  flex-direction: column;
  gap: 5px;

  > * {
    height: 15px;
  }
`;

const Top = styled.div`
  height: 35px;
`;

const BarField = styled.div`
  display: flex;
  align-items: center;
  gap: ${(p) => p.$gap || "0"};
`;

const BarLabel = styled.label`
  width: 12px;
  font-size: 9px;
`;

const BarInput = styled.input`
  width: ${(p) => p.$width};
  height: 14px;
  margin-left: 2px;
  padding-left: 2px;
  background: #a3a3a3;
  border: 1px solid #2e2e2e;
  color: #161616;
`;

const OpacityInput = styled(BarInput)`
  width: 32px;
  margin-left: 5px;
`;

const Stepper = styled.span`
  display: flex;
  flex-direction: column;
  flex: none;
  width: 12px;
  height: 14px;
  border: 1px solid #2c2c2c;
  background: #444;
  color: ${(p) => (p.$off ? "#777" : "#ddd")};
`;

const StepButton = styled.button`
  display: grid;
  place-items: center;
  height: 6px;
`;

const DropButton = styled.button`
  display: grid;
  place-items: center;
  flex: none;
  width: ${(p) => (p.$narrow ? "12px" : "15px")};
  height: 14px;
  border: 1px solid #2c2c2c;
  background: #4e4e4e;
`;

const ChainButton = styled.button`
  display: grid;
  place-items: center;
  width: 15px;
  height: 23px;
  margin: ${(p) => (p.$spaced ? "0 4px" : "0 0 0 -3px")};
  background: #242424;
`;

const IconButton = styled.button`
  display: grid;
  place-items: center;
  min-width: 16px;
  opacity: ${(p) => (p.$dim ? 0.5 : 1)};
  ${(p) => p.$on && css`
    background: #222;
    box-shadow: 0 0 0 2px #222;
  `}
`;

const Proxy = styled.svg`
  width: 25px;
  height: 25px;
`;

const Swatch = styled.i`
  width: 15px;
  border: ${(p) => (p.$none ? "0" : "1px solid #d8674f")};
  background: ${(p) =>
    p.$none
      ? "linear-gradient(to bottom right, #fff 45%, #b31224 46%, #b31224 54%, #fff 55%)"
      : "radial-gradient(circle, #333 15%, #c94a33 30%)"};
`;

const LineStyle = styled.i`
  width: 58px;
  height: 13px;
  border: 2px solid #999;
  border-right-width: 7px;
  background: #000;
`;

const Fx = styled.i`
  width: 17px;
  font: italic ${(p) => (p.$big ? "16px" : "13px")}/15px "Open Sans", sans-serif;
  text-align: center;
`;

const CornerShape = styled.i`
  position: relative;
  width: 22px;
  height: 13px;
  background: #a3a3a3;

  &::after {
    content: "";
    display: block;
    width: 14px;
    height: 8px;
    margin: 3px 0 0 2px;
    border: solid #111;
    border-width: 2px 2px 0 0;
  }
`;

const BarEnd = styled.div`
  display: flex;
  align-items: center;
  gap: 13px;
  margin-left: auto;
  padding-right: 3px;
`;

const Grip = styled.i`
  display: block;
  width: ${(p) => (p.$tall ? "3px" : "20px")};
  height: ${(p) => (p.$tall ? "14px" : "4px")};
  margin: 0 auto;
  background: repeating-linear-gradient(
    ${(p) => (p.$tall ? "0deg" : "90deg")},
    #1c1c1c 0 1px,
    #333 1px 2px
  );
`;

const Body = styled.main`
  flex: 1;
  display: grid;
  grid-template-columns: 29px 1fr 156px;
  border-bottom: 1px solid #141414;
`;

const DockHead = styled.div`
  display: flex;
  justify-content: ${(p) => (p.$right ? "flex-end" : "flex-start")};
  align-items: center;
  height: 11px;
  padding: 0 3px;
  background: #262626;
`;

const Tools = styled.aside`
  background: #404040;
  border-right: 1px solid #222;

  > ${Grip} {
    margin: 3px auto 8px;
  }
`;

const ToolGroup = styled.div`
  display: flex;
  flex-direction: column;
  align-items: center;

  & + & {
    margin-top: 2px;
    padding-top: 3px;
    border-top: 1px solid #2c2c2c;
  }
`;

const ToolButton = styled.button`
  position: relative;
  display: grid;
  place-items: center;
  width: 22px;
  height: 20px;
  margin-top: ${(p) => (p.$last ? "4px" : "0")};
  background: ${(p) => (p.$on ? "#282828" : "none")};

  &::after {
    content: "";
    position: absolute;
    right: 0;
    bottom: 2px;
    border: solid transparent;
    border-width: ${(p) => (p.$more ? "3px 0 0 3px" : "0")};
    border-bottom: ${(p) => (p.$more ? "3px solid #ddd" : "0")};
  }
`;

const TypeGlyph = styled.span`
  font: 18px/20px "Liberation Serif", serif;
`;

const SmallTools = styled.div`
  display: flex;
  align-items: center;
  gap: 5px;
  width: 20px;
  height: 12px;
  font: 11px/12px "Liberation Serif", serif;
`;

const SquareMark = styled.i`
  width: 8px;
  height: 8px;
  border: 1px solid #ccc;
`;

const ColorChip = styled.i`
  width: 12px;
  height: 12px;
  background: #c94a33;
  border: 1px solid #e07763;
`;

const Document = styled.section`
  display: flex;
  flex-direction: column;
  min-width: 0;
  background: #262626;
`;

const TabBar = styled.div`
  height: 18px;
  padding-left: 3px;
`;

const DocTab = styled.button`
  height: 18px;
  padding: 0 7px 0 5px;
  background: #3c3c3c;
  font: 700 11px/18px ${label};
  color: #e2e2e2;

  span {
    margin-right: 9px;
  }
`;

const Workarea = styled.div`
  flex: 1;
  display: grid;
  grid-template: 15px 1fr / 16px 1fr 15px;
`;

const RulerCorner = styled.div`
  background: #1e1e1e;
`;

const RulerTop = styled.div`
  overflow: hidden;
  background: #1e1e1e;
`;

const RulerSide = styled.div`
  position: relative;
  overflow: hidden;
  background: #1e1e1e;

  svg {
    position: absolute;
  }
`;

const ScrollColumn = styled.div`
  grid-column: 3;
  grid-row: 1 / 3;
  display: flex;
  flex-direction: column;
  align-items: center;
  padding-top: 4px;
  background: #292929;

  svg:last-child {
    margin-top: auto;
  }
`;

const ScrollThumb = styled.i`
  width: 13px;
  height: 74px;
  margin-top: 16px;
  background: #8c8c8c;
`;

const Pasteboard = styled.div`
  display: flex;
  padding: 16px 50px 15px 51px;
  background: #bfbfbf;
`;

const Page = styled.article`
  flex: 1;
  border: 1px solid #1e1e1e;
  background: #fefefc;
  color: #111;
`;

const PageHeader = styled.header`
  display: flex;
  align-items: center;
  gap: 17px;
`;

const Banner = styled.h1`
  width: 143px;
  margin: 0;
  background: #c94a33;
  color: #fff;
  font: 700 12px/23px ${label};
  letter-spacing: 1px;
  text-align: center;
`;

const SubTitle = styled.span`
  color: #a3a39f;
  font: 700 11px/23px ${bar};
`;

const Frames = styled.div`
  display: grid;
  grid-template: repeat(2, 151px) / repeat(2, 145px);
  gap: 10px 11px;
  margin: 89px 0 0 327px;
`;

const Frame = styled.div`
  position: relative;
  display: flex;
  flex-direction: column;
  justify-content: ${(p) => p.$justify || "flex-start"};
  padding: 0 2px;
  border: 2px solid ${(p) => (p.$selected ? "#77779f" : "#cc6654")};
  font-family: ${bar};
  white-space: nowrap;
`;

const Heading = styled.h2`
  margin: 0;
  font-size: 17px;
  line-height: 18px;
  font-weight: 400;
`;

const Copy = styled.p`
  margin: 0;
  font-size: 11px;
  line-height: 14px;
  font-weight: 500;
`;

const Handles = styled.div`
  position: absolute;
  inset: -1px;
`;

const Handle = styled.i`
  position: absolute;
  left: ${(p) => p.$x}%;
  top: ${(p) => p.$y}%;
  width: ${(p) => (p.$big ? "9px" : "7px")};
  height: ${(p) => (p.$big ? "9px" : "7px")};
  transform: translate(-50%, -50%);
  border: 1px solid #5b8fe6;
  background: ${(p) => p.$fill || "#fff"};
`;

const Cursor = styled.svg`
  position: absolute;
  left: 4px;
  top: 32px;
  width: 12px;
  height: 17px;
`;

const StatusBar = styled.footer`
  display: flex;
  height: 14px;
  background: #404040;
`;

const Status = styled.div`
  display: flex;
  align-items: center;
  flex: none;
  gap: 7px;
  width: 408px;
  padding-left: 20px;
  font-size: 8px;
  white-space: nowrap;
`;

const PageNumber = styled.input`
  width: 68px;
  font-size: 9px;
`;

const Profile = styled.span`
  width: 92px;
  color: #6c6c6c;
`;

const Dot = styled.i`
  width: 9px;
  height: 9px;
  margin-right: -3px;
  border-radius: 50%;
  background: #666;
`;

const Preflight = styled.span`
  font-size: 8px;
  font-weight: 600;
`;

const ScrollRow = styled.div`
  flex: 1;
  display: flex;
  align-items: center;
  gap: 5px;
  padding: 0 17px 0 4px;
  background: #292929;
`;

const ScrollTrack = styled.div`
  flex: 1;
  height: 13px;

  i {
    display: block;
    width: 36%;
    height: 13px;
    margin-left: 32%;
    background: #8c8c8c;
  }
`;

const Panels = styled.aside`
  background: #404040;
  border-left: 2px solid #222;
`;

const PanelGroup = styled.section`
  position: relative;
  padding: 9px 10px 3px;
  border-top: 1px solid #282828;

  &:last-child {
    border-bottom: 1px solid #282828;
  }

  > ${Grip} {
    position: absolute;
    top: 2px;
    left: calc(50% - 10px);
  }
`;

const PanelButton = styled.button`
  display: flex;
  align-items: center;
  gap: 8px;
  width: 100%;
  height: 26px;
  font: 700 11px/26px ${label};
  color: #dedede;
  white-space: nowrap;

  svg {
    color: #c4c4c4;
  }
`;

const DialogBox = styled.section`
  position: absolute;
  left: 614px;
  top: 156px;
  width: 368px;
  border-radius: 5px;
  overflow: hidden;
  background: #404040;
  box-shadow: 0 16px 36px rgba(0, 0, 0, 0.6), 0 0 6px rgba(0, 0, 0, 0.3);
  font-size: 11px;
`;

const DialogTitle = styled.h2`
  margin: 0;
  background: linear-gradient(#f3f3f3, #d6d6d6);
  color: #444;
  font-size: 12px;
  line-height: 22px;
  font-weight: 400;
  text-align: center;
`;

const DialogBody = styled.form`
  padding: 15px 14px 15px;
`;

const TabPanel = styled.fieldset`
  margin: 0;
  padding: 7px 14px 27px 14px;
  border: 1px solid #2b2b2b;
`;

const TabList = styled.legend`
  display: flex;
  margin: 0 auto;
  padding: 0 4px;
`;

const Tab = styled.button`
  height: 18px;
  padding: 0 9px;
  border: 1px solid #2b2b2b;
  background: ${(p) => (p.$on ? "#262626" : "linear-gradient(#575757, #484848)")};
`;

const Section = styled.fieldset`
  margin: 0 0 8px;
  padding: 4px 14px 12px 8px;
  border: 1px solid #2b2b2b;

  &:last-of-type {
    margin-bottom: 4px;
  }
`;

const Legend = styled.legend`
  display: flex;
  align-items: center;
  gap: 2px;
  padding: 0 3px;
  line-height: 16px;
`;

const Select = styled.span`
  position: relative;
  width: ${(p) => p.$width};

  select {
    appearance: none;
    width: 100%;
    height: 17px;
    padding-left: 1px;
    border: 1px solid #2b2b2b;
    background: linear-gradient(#575757, #464646);
  }

  svg {
    position: absolute;
    right: 3px;
    top: 5px;
    pointer-events: none;
  }
`;

const Fields = styled.div`
  display: grid;
  grid-template-columns: ${(p) => p.$cols};
  align-items: center;
  gap: 7px 4px;
`;

const FieldLabel = styled.label`
  color: ${(p) => (p.$off ? "#8a8a8a" : "inherit")};
  line-height: 16px;
  text-align: right;
  white-space: nowrap;
`;

const FieldBox = styled.span`
  display: flex;
  align-items: center;
  gap: 2px;
`;

const TextInput = styled.input`
  width: 57px;
  height: 17px;
  padding-left: 2px;
  border: 1px solid ${(p) => (p.$focus ? "#c9a45c" : "#2e2e2e")};
  background: ${(p) => (p.$focus ? "linear-gradient(90deg, #a3a3a3 2px, #b9d0f2 2px, #b9d0f2 9px, #a3a3a3 9px)" : "#a3a3a3")};
  color: #1a1a1a;
  font-size: 12px;

  &:disabled {
    color: #777;
  }
`;

const Check = styled.label`
  display: flex;
  align-items: center;
  gap: 5px;
  margin: ${(p) => (p.$outer ? "0" : "7px 0 0 2px")};
  line-height: 16px;

  input {
    appearance: none;
    width: 11px;
    height: 11px;
    border: 1px solid #2b2b2b;
    background: #4a4a4a;
  }

  input:checked::after {
    content: "";
    display: block;
    width: 4px;
    height: 9px;
    margin: -2px 0 0 3px;
    border: solid #e4e4e4;
    border-width: 0 2px 2px 0;
    transform: rotate(40deg);
  }
`;

const InsetRow = styled.div`
  display: flex;
  justify-content: space-between;
  align-items: center;
`;

const DialogFooter = styled.footer`
  display: flex;
  align-items: center;
  gap: 11px;
  margin-top: 16px;

  > label {
    margin-right: auto;
  }
`;

const DialogButton = styled.button`
  width: 83px;
  height: 18px;
  border: 1px solid #2b2b2b;
  box-shadow: ${(p) => (p.$main ? "0 0 0 1px #2b2b2b" : "none")};
  background: linear-gradient(#575757, #464646);
`;

const Brand = styled.div`
  position: absolute;
  right: 15px;
  bottom: 13px;
  display: flex;
  align-items: center;
  gap: 3px;
  color: #6c6c6c;
  font: 700 26px/30px "Liberation Sans", sans-serif;

  b {
    width: 30px;
    border-radius: 2px;
    background: #6c6c6c;
    color: #404040;
    text-align: center;
  }
`;

const Watermark = styled.div`
  position: absolute;
  right: 9px;
  bottom: 9px;
  color: rgba(225, 225, 225, 0.75);
  font: 16px/20px "Liberation Sans", sans-serif;
`;

const CornerMark = styled.div`
  position: absolute;
  left: 2px;
  top: 0;
  color: rgba(255, 255, 255, 0.7);
  -webkit-text-stroke: 1px #222;
  font: 24px/26px "DejaVu Sans", sans-serif;
`;

const Subtitles = styled.div`
  position: absolute;
  left: 0;
  right: 0;
  bottom: 26px;
  color: #fff;
  font: 25px/32px "Noto Sans CJK SC", sans-serif;
  text-align: center;
  -webkit-text-stroke: 5px #000;
  paint-order: stroke fill;

  p {
    height: 32px;
    margin: 0;
  }
`;

const Latin = styled.span`
  font-family: "Liberation Sans", sans-serif;
  font-size: 29px;
`;
